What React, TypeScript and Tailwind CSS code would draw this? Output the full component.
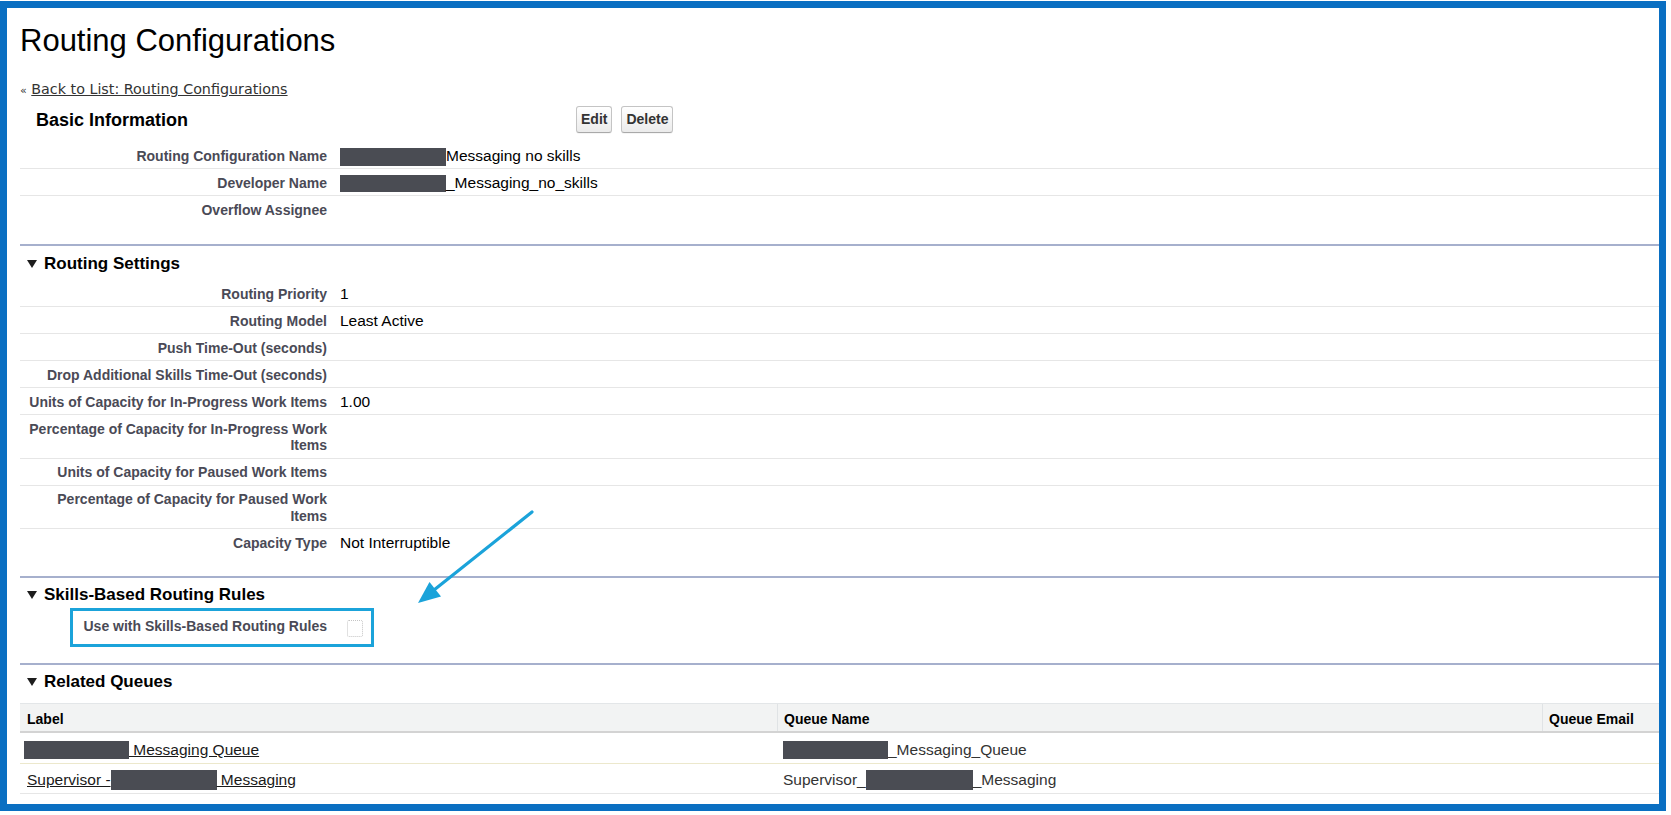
import React from "react";

function Redact({ cls }: { cls: string }) {
  return <span className={`inline-block shrink-0 bg-[#4a4c53] ${cls}`} />;
}

function Row({
  label,
  children,
  last,
}: {
  label: React.ReactNode;
  children?: React.ReactNode;
  last?: boolean;
}) {
  return (
    <div className={last ? "flex" : "flex border-b border-[#e6e6e6]"}>
      <div className="w-[313px] shrink-0 pl-[4px] pr-[6px] pt-[5.5px] pb-[4px] text-right text-[14px] leading-[16.5px] font-bold text-[#4a4a56]">
        {label}
      </div>
      <div className="flex-1 flex items-start pl-[7px] pt-[5.5px] text-[15.5px] leading-[16.5px] text-black">
        {children}
      </div>
    </div>
  );
}

function Tri() {
  return (
    <svg width="10" height="8" viewBox="0 0 10 8" className="shrink-0">
      <polygon points="0,0 10,0 5,8" fill="#1d1d1d" />
    </svg>
  );
}

function SectionHeader({ title, cls }: { title: string; cls: string }) {
  return (
    <div className={`flex items-center pl-[7px] gap-[7px] ${cls}`}>
      <Tri />
      <span className="text-[17px] font-bold text-black leading-[20px]">{title}</span>
    </div>
  );
}

function Btn({ children }: { children: React.ReactNode }) {
  return (
    <button className="h-[27px] px-[4px] rounded-[3px] border border-[#c4c4c4] border-b-[#a9a9a9] bg-gradient-to-b from-[#ffffff] to-[#ebebeb] text-[14px] font-bold text-[#333] leading-[25px] shadow-[0_1px_0_rgba(0,0,0,0.04)]">
      {children}
    </button>
  );
}

export default function App() {
  return (
    <div className="relative w-[1671px] h-[815px] bg-white overflow-hidden font-['Liberation_Sans',Arial,sans-serif]">
      <div className="mt-[1px] w-[1666px] h-[810px] border-[7px] border-[#0a6fc2]">
        <div className="pl-[13px]">
          {/* Title */}
          <h1 className="mt-[15px] text-[31px] leading-[36px] text-black font-normal">
            Routing Configurations
          </h1>

          {/* Back link */}
          <div className="mt-[21px] h-[18px] text-[14.3px] leading-[18px] text-[#333] font-['DejaVu_Sans',Verdana,sans-serif]">
            <span className="text-[11px]">«</span>{" "}
            <a className="underline cursor-pointer">Back to List: Routing Configurations</a>
          </div>

          {/* Basic information header */}
          <div className="mt-[8px] h-[27px] flex items-center">
            <div className="w-[556px] shrink-0 pl-[16px] text-[18px] font-bold text-black leading-[22px]">
              Basic Information
            </div>
            <div className="flex gap-[9px]">
              <Btn>Edit</Btn>
              <Btn>Delete</Btn>
            </div>
          </div>

          {/* Basic info rows */}
          <div className="mt-[9px] pb-[22px]">
            <Row label="Routing Configuration Name">
              <Redact cls="w-[106px] h-[18px]" />
              <span>Messaging no skills</span>
            </Row>
            <Row label="Developer Name">
              <Redact cls="w-[106px] h-[17px]" />
              <span>_Messaging_no_skills</span>
            </Row>
            <Row label="Overflow Assignee" last />
          </div>

          {/* Routing Settings */}
          <div className="border-t-2 border-[#a6b0cd]">
            <SectionHeader title="Routing Settings" cls="h-[34px] pt-[1px]" />
            <div className="pb-[21px]">
              <Row label="Routing Priority">1</Row>
              <Row label="Routing Model">Least Active</Row>
              <Row label="Push Time-Out (seconds)" />
              <Row label="Drop Additional Skills Time-Out (seconds)" />
              <Row label="Units of Capacity for In-Progress Work Items">1.00</Row>
              <Row label="Percentage of Capacity for In-Progress Work Items" />
              <Row label="Units of Capacity for Paused Work Items" />
              <Row label="Percentage of Capacity for Paused Work Items" />
              <Row label="Capacity Type" last>
                Not Interruptible
              </Row>
            </div>
          </div>

          {/* Skills-Based Routing Rules */}
          <div className="border-t-2 border-[#a6b0cd]">
            <SectionHeader title="Skills-Based Routing Rules" cls="h-[30px] pt-[4px]" />
            <div className="relative h-[39px] mb-[16px]">
              <div className="flex pt-[9.5px]">
                <div className="w-[313px] shrink-0 pl-[4px] pr-[6px] text-right text-[14px] leading-[16.5px] font-bold text-[#4a4a56]">
                  Use with Skills-Based Routing Rules
                </div>
                <div className="ml-[14px] mt-[2px] w-[16px] h-[17px] rounded-[2px] border border-dotted border-[#c4c4c4] bg-white" />
              </div>
              <div className="absolute left-[50px] top-0 w-[304px] h-[39px] border-[3px] border-[#1ba3da]" />
            </div>
          </div>

          {/* Related Queues */}
          <div className="border-t-2 border-[#a6b0cd]">
            <SectionHeader title="Related Queues" cls="h-[30px] pt-[4px]" />
            <div className="mt-[8px] text-[15.5px]">
              <div className="grid grid-cols-[757px_765px_117px] h-[30px] bg-[#f2f3f3] border-t border-[#e3e6e8] border-b-2 border-b-[#d3d3d3] text-[14px] font-bold text-black">
                <div className="flex items-center pl-[7px] pt-[4px]">Label</div>
                <div className="flex items-center pl-[6px] pt-[4px] border-l border-[#e0e3e5]">Queue Name</div>
                <div className="flex items-center pl-[6px] pt-[4px] border-l border-[#e0e3e5]">Queue Email</div>
              </div>
              <div className="grid grid-cols-[757px_765px_117px] h-[31px] border-b border-[#ece8cc]">
                <div className="flex items-center pl-[4px] pt-[3px] text-[#1a1a1a]">
                  <Redact cls="w-[105px] h-[18px]" />
                  <a className="underline cursor-pointer whitespace-pre"> Messaging Queue</a>
                </div>
                <div className="flex items-center pl-[6px] pt-[3px] text-[#333]">
                  <Redact cls="w-[105px] h-[18px]" />
                  <span>_Messaging_Queue</span>
                </div>
                <div />
              </div>
              <div className="grid grid-cols-[757px_765px_117px] h-[30px] border-b border-[#e6e6e6]">
                <div className="flex items-center pl-[7px] pt-[3px] text-[#1a1a1a]">
                  <a className="underline cursor-pointer whitespace-pre">Supervisor -</a>
                  <Redact cls="w-[106px] h-[20px]" />
                  <a className="underline cursor-pointer whitespace-pre"> Messaging</a>
                </div>
                <div className="flex items-center pl-[6px] pt-[3px] text-[#333]">
                  <span>Supervisor_</span>
                  <Redact cls="w-[107px] h-[20px]" />
                  <span>_Messaging</span>
                </div>
                <div />
              </div>
            </div>
          </div>
        </div>
      </div>

      {/* Annotation arrow */}
      <svg
        className="absolute left-[400px] top-[500px]"
        width="150"
        height="120"
        viewBox="0 0 150 120"
      >
        <line x1="132" y1="12" x2="34" y2="90" stroke="#1ba3da" strokeWidth="3.2" strokeLinecap="round" />
        <polygon points="18,103 41,96.5 29.5,82" fill="#1ba3da" />
      </svg>
    </div>
  );
}
